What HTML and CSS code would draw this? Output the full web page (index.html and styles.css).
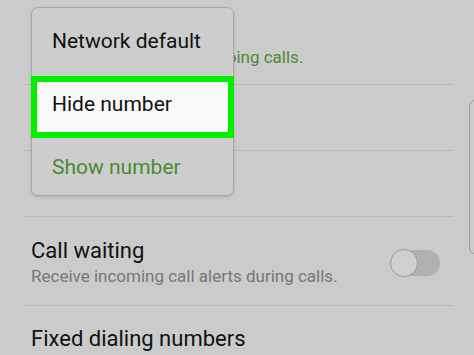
FILE: index.html
```html
<!DOCTYPE html>
<html>
<head>
<meta charset="utf-8">
<link rel="stylesheet" href="styles.css">
</head>
<body>
<div class="screen">
  <div class="list">
    <div class="row row-first">
      <div class="sub sub-green">Hide your number on outgoing calls.</div>
    </div>
    <div class="row row-mid"></div>
    <div class="row row-mid"></div>
    <div class="row row-wait">
      <div class="text">
        <div class="title">Call waiting</div>
        <div class="sub">Receive incoming call alerts during calls.</div>
      </div>
      <div class="toggle"><span class="thumb"></span></div>
    </div>
    <div class="row row-last">
      <div class="title">Fixed dialing numbers</div>
    </div>
  </div>

  <div class="menu">
    <div class="item">Network default</div>
    <div class="item item-selected"><span class="hl"></span><span class="label">Hide number</span></div>
    <div class="item item-green">Show number</div>
  </div>

  <div class="side-panel"></div>
</div>
</body>
</html>
```

FILE: styles.css
```css
* { box-sizing: border-box; }
html, body {
  margin: 0;
  padding: 0;
  background: #cbcbcb;
}
body {
  font-family: Roboto, "Noto Sans", "Liberation Sans", sans-serif;
  color: #111;
}
.screen {
  position: relative;
  width: 474px;
  height: 355px;
  overflow: hidden;
  background: #cbcbcb;
}
.list {
  padding: 0 21px 0 23px;
}
.row {
  border-bottom: 1px solid #b9b9b9;
  padding-left: 8px;
}
.title {
  font-size: 22px;
  line-height: 24px;
  color: #111;
  white-space: nowrap;
}
.sub {
  font-size: 17px;
  line-height: 20px;
  color: #777;
  white-space: nowrap;
}
.sub-green { color: #4d8a35; }
.row-first {
  height: 85px;
  padding-top: 47px;
}
.row-mid {
  height: 66px;
}
.row-wait {
  height: 89px;
  display: flex;
  align-items: center;
  justify-content: space-between;
  padding-right: 13px;
  padding-top: 3px;
}
.row-wait .sub { margin-top: 3px; }
.row-last {
  border-bottom: none;
  padding-top: 21px;
}
.toggle {
  position: relative;
  width: 50px;
  height: 28px;
  display: flex;
  align-items: center;
}
.toggle::before {
  content: "";
  position: absolute;
  left: 10px;
  right: 0;
  top: 1px;
  bottom: 1px;
  border-radius: 13px;
  background: #b1b1b1;
}
.thumb {
  position: relative;
  width: 28px;
  height: 28px;
  border-radius: 50%;
  background: #d0d0d0;
  border: 1.5px solid #9a9a9a;
}
.menu {
  position: absolute;
  left: 31px;
  top: 7px;
  width: 203px;
  height: 189px;
  background: #cdcdcd;
  border: 1px solid #a9a9a9;
  border-radius: 7px;
  box-shadow: 0 1px 3px rgba(0,0,0,0.15);
}
.item {
  position: relative;
  height: 63px;
  padding: 21px 0 0 20px;
  font-size: 21px;
  line-height: 24px;
  color: #111;
  white-space: nowrap;
}
.item-green { color: #4a8a30; }
.hl {
  position: absolute;
  left: -1px;
  right: -1px;
  top: 5px;
  bottom: -4px;
  border: 6px solid #00f000;
  background: #f8f8f8;
}
.label { position: relative; }
.side-panel {
  position: absolute;
  left: 469px;
  top: 100px;
  width: 20px;
  height: 154px;
  border: 1px solid #9c9c9c;
  border-radius: 6px;
}
```
